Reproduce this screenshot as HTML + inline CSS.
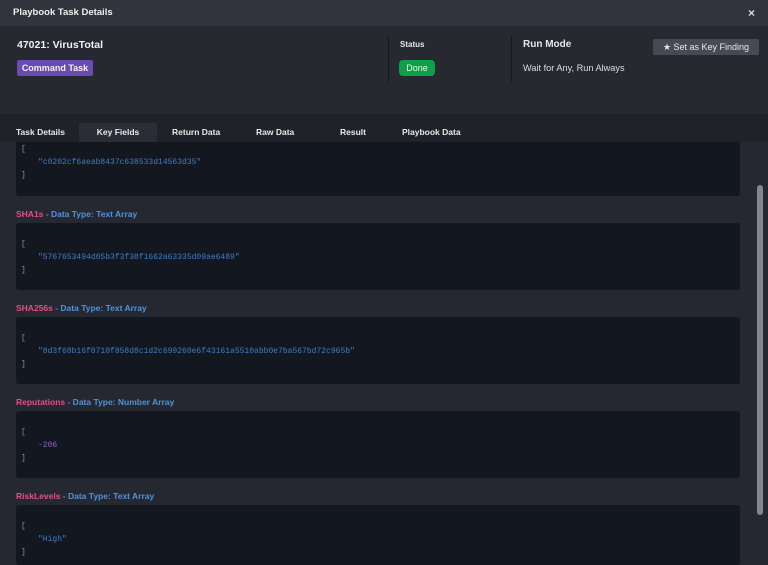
<!DOCTYPE html>
<html><head><style>
*{margin:0;padding:0;box-sizing:border-box}
body{width:768px;height:553px;overflow:hidden;background:#252830;font-family:"Liberation Sans",sans-serif;position:relative;color:#e6e7ea}
.title{position:absolute;left:0;top:0;width:768px;height:26px;background:#31343d;font-size:9.5px;font-weight:bold;padding:7px 13px;color:#f0f0f0}
.close{position:absolute;right:13px;top:6px;font-size:12px;font-weight:bold;color:#ddd}
.hdr{position:absolute;left:0;top:26px;width:768px;height:88px;background:#262930}
.abs{position:absolute}
.tabs{position:absolute;left:0;top:114px;width:768px;height:28px;background:#1f2229}
.tab{position:absolute;top:0;height:28px;line-height:36px;font-size:8.5px;font-weight:bold;color:#e8e8e8}
.tab.active{background:#2a2d35;text-align:center;left:79px;width:78px;top:9px;height:19px;line-height:19px}
.block{position:absolute;left:16px;width:724px;background:#131720;border-radius:3px;font-family:"Liberation Mono",monospace;font-size:8px;color:#8a8f99}
.block div{position:absolute}
.lbl{position:absolute;left:16px;font-size:8.5px;font-weight:bold;color:#4e93dc}
.lbl span{color:#e54f83}
.v{color:#3f7fc6}
</style></head><body>
<div class="title">Playbook Task Details<span class="close">×</span></div>
<div class="hdr"></div>
<div class="abs" style="left:17px;top:39px;font-size:10.5px;font-weight:bold;color:#f2f2f2">47021: VirusTotal</div>
<div class="abs" style="left:17px;top:60px;width:76px;height:16px;background:#6a4bb3;border-radius:2px;font-size:9px;font-weight:bold;line-height:16px;text-align:center;color:#f2f2f2">Command Task</div>
<div class="abs" style="left:388px;top:36px;width:1px;height:46px;background:#15171c"></div>
<div class="abs" style="left:400px;top:40px;font-size:8px;font-weight:bold">Status</div>
<div class="abs" style="left:399px;top:60px;width:36px;height:16px;background:#0e9f4a;border-radius:4px;font-size:9px;line-height:16px;text-align:center;color:#eaf8ee">Done</div>
<div class="abs" style="left:511px;top:36px;width:1px;height:46px;background:#15171c"></div>
<div class="abs" style="left:523px;top:39px;font-size:10px;font-weight:bold">Run Mode</div>
<div class="abs" style="left:523px;top:63px;font-size:9.2px;color:#dcdde0">Wait for Any, Run Always</div>
<div class="abs" style="left:653px;top:39px;width:106px;height:16px;background:#464a54;border-radius:2px;font-size:9px;line-height:16px;text-align:center;color:#e8e8e8">★ Set as Key Finding</div>
<div class="tabs">
<div class="tab" style="left:16px">Task Details</div>
<div class="tab active">Key Fields</div>
<div class="tab" style="left:172px">Return Data</div>
<div class="tab" style="left:256px">Raw Data</div>
<div class="tab" style="left:340px">Result</div>
<div class="tab" style="left:402px">Playbook Data</div>
</div>
<div class="block" style="top:142px;height:54px;border-radius:0 0 3px 3px"><div style="left:5px;top:3px">[</div><div class="v" style="left:22px;top:16px">"c0202cf6aeab8437c638533d14563d35"</div><div style="left:5px;top:29px">]</div></div>
<div class="lbl" style="top:209px"><span>SHA1s</span> - Data Type: Text Array</div>
<div class="block" style="top:223px;height:67px"><div style="left:5px;top:17px">[</div><div class="v" style="left:22px;top:30px">"5767653494d05b3f3f38f1662a63335d09ae6489"</div><div style="left:5px;top:43px">]</div></div>
<div class="lbl" style="top:303px"><span>SHA256s</span> - Data Type: Text Array</div>
<div class="block" style="top:317px;height:67px"><div style="left:5px;top:17px">[</div><div class="v" style="left:22px;top:30px">"8d3f68b16f0710f858d8c1d2c699260e6f43161a5510abb0e7ba567bd72c965b"</div><div style="left:5px;top:43px">]</div></div>
<div class="lbl" style="top:397px"><span>Reputations</span> - Data Type: Number Array</div>
<div class="block" style="top:411px;height:67px"><div style="left:5px;top:17px">[</div><div style="left:22px;top:30px;color:#9565cf">-206</div><div style="left:5px;top:43px">]</div></div>
<div class="lbl" style="top:491px"><span>RiskLevels</span> - Data Type: Text Array</div>
<div class="block" style="top:505px;height:60px"><div style="left:5px;top:17px">[</div><div class="v" style="left:22px;top:30px">"High"</div><div style="left:5px;top:43px">]</div></div>
<div class="abs" style="left:757px;top:185px;width:6px;height:330px;background:#85878c;border-radius:3px"></div>
</body></html>
